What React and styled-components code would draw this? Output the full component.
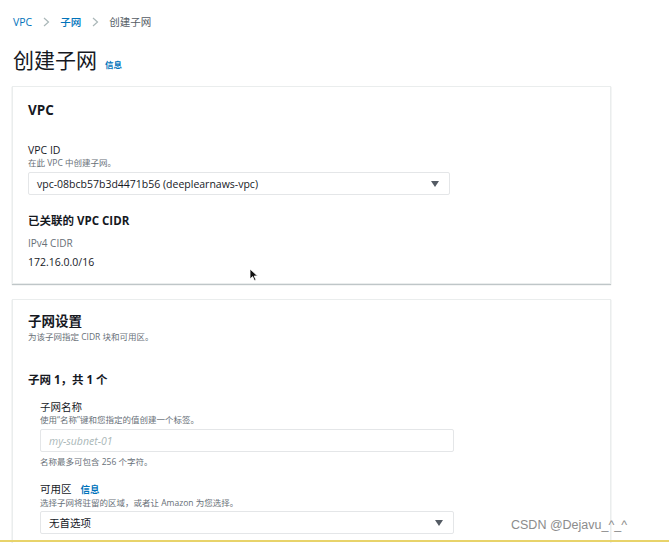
import React from 'react';
import styled, { createGlobalStyle } from 'styled-components';

const GlobalStyle = createGlobalStyle`
  html, body {
    margin: 0;
    padding: 0;
    background: #ffffff;
  }
  body {
    font-family: "Open Sans", "Noto Sans CJK SC", sans-serif;
    color: #16191f;
  }
`;

const Page = styled.div`
  position: relative;
  width: 669px;
  height: 543px;
  overflow: hidden;
  box-sizing: border-box;
  padding: 14px 0 0 12px;
`;

const Breadcrumbs = styled.nav`
  display: flex;
  align-items: center;
  height: 16px;
  padding-left: 1px;
  font-size: 10.5px;
  line-height: 16px;
`;

const Crumb = styled.span`
  color: ${props => (props.current ? '#545b64' : '#0073bb')};
  font-weight: ${props => (props.current ? 400 : 500)};
`;

const Chevron = styled.span`
  display: inline-flex;
  margin: 0 10px 0 11px;
  color: #aab7b8;
`;

const TitleRow = styled.div`
  display: flex;
  align-items: baseline;
  gap: 8px;
  margin-top: 15px;
  height: 30px;
  padding-left: 1px;
`;

const Title = styled.h1`
  margin: 0;
  font-size: 21px;
  font-weight: 400;
  line-height: 30px;
  color: #16191f;
`;

const InfoLink = styled.span`
  color: #0073bb;
  font-weight: 700;
  font-size: ${props => (props.small ? '8.5px' : '9.5px')};
  margin-left: ${props => props.gap || 0}px;
`;

const Card = styled.section`
  width: 599px;
  box-sizing: border-box;
  margin-top: ${props => props.top}px;
  border: 1px solid #eaeded;
  box-shadow: 0 1px 1px 0 rgba(0, 28, 36, 0.25);
  background: #fff;
  padding: ${props => props.pad};
`;

const CardTitle = styled.h2`
  margin: 0;
  font-size: 13.5px;
  font-weight: 700;
  line-height: 20px;
`;

const SubHeading = styled.h3`
  margin: ${props => props.top}px 0 0;
  font-size: 11.5px;
  font-weight: 700;
  line-height: 16px;
`;

const Field = styled.div`
  margin-top: ${props => props.top}px;
  padding-left: ${props => props.indent || 0}px;
`;

const Label = styled.div`
  display: flex;
  align-items: baseline;
  font-size: 10.5px;
  line-height: 14px;
  color: #16191f;
`;

const Description = styled.div`
  font-size: 8.5px;
  line-height: 12px;
  color: #687078;
  margin-top: ${props => props.top || 0}px;
`;

const Box = styled.div`
  display: flex;
  align-items: center;
  justify-content: space-between;
  box-sizing: border-box;
  width: ${props => props.width}px;
  height: 23px;
  margin-top: ${props => props.top}px;
  padding: 0 10px 0 8px;
  border: 1px solid #e4e6e8;
  border-radius: 2px;
  background: #fff;
  font-size: 10.5px;
  color: #16191f;
`;

const Placeholder = styled.span`
  font-style: italic;
  color: #aab7b8;
`;

const Caret = styled.span`
  width: 0;
  height: 0;
  border-left: 4.5px solid transparent;
  border-right: 4.5px solid transparent;
  border-top: 6px solid #545b64;
`;

const MetaLabel = styled.div`
  margin-top: 7px;
  font-size: 10px;
  line-height: 14px;
  color: #687078;
`;

const MetaValue = styled.div`
  margin-top: 5px;
  font-size: 10.5px;
  line-height: 14px;
  color: #16191f;
`;

const Cursor = styled.svg`
  position: absolute;
  left: 249px;
  top: 268px;
`;

const Watermark = styled.div`
  position: absolute;
  left: 511px;
  top: 516px;
  font-family: "Liberation Sans", Arial, sans-serif;
  font-size: 12.5px;
  line-height: 18px;
  color: #8c8c8c;
`;

const BottomRule = styled.div`
  position: absolute;
  left: 0;
  right: 0;
  top: 540px;
  height: 2px;
  background: #e8d36a;
`;

const ChevronIcon = () => (
  <svg width="7" height="10" viewBox="0 0 7 10">
    <path d="M1 1l4.5 4L1 9" fill="none" stroke="currentColor" strokeWidth="1.2" />
  </svg>
);

export default function App() {
  return (
    <Page>
      <GlobalStyle />
      <Breadcrumbs>
        <Crumb>VPC</Crumb>
        <Chevron><ChevronIcon /></Chevron>
        <Crumb>子网</Crumb>
        <Chevron><ChevronIcon /></Chevron>
        <Crumb current>创建子网</Crumb>
      </Breadcrumbs>

      <TitleRow>
        <Title>创建子网</Title>
        <InfoLink small>信息</InfoLink>
      </TitleRow>

      <Card top={11} pad="13px 15px 14px 15px">
        <CardTitle>VPC</CardTitle>
        <Field top={23}>
          <Label>VPC ID</Label>
          <Description>在此 VPC 中创建子网。</Description>
          <Box width={422} top={3}>
            <span>vpc-08bcb57b3d4471b56 (deeplearnaws-vpc)</span>
            <Caret />
          </Box>
        </Field>
        <SubHeading top={18}>已关联的 VPC CIDR</SubHeading>
        <MetaLabel>IPv4 CIDR</MetaLabel>
        <MetaValue>172.16.0.0/16</MetaValue>
      </Card>

      <Card top={15} pad="11px 15px 40px 15px">
        <CardTitle>子网设置</CardTitle>
        <Description top={0}>为该子网指定 CIDR 块和可用区。</Description>
        <SubHeading top={29}>子网 1，共 1 个</SubHeading>
        <Field top={12} indent={12}>
          <Label>子网名称</Label>
          <Description>使用“名称”键和您指定的值创建一个标签。</Description>
          <Box width={414} top={3}>
            <Placeholder>my-subnet-01</Placeholder>
          </Box>
          <Description top={4}>名称最多可包含 256 个字符。</Description>
        </Field>
        <Field top={14} indent={12}>
          <Label>
            可用区<InfoLink gap={9}>信息</InfoLink>
          </Label>
          <Description>选择子网将驻留的区域，或者让 Amazon 为您选择。</Description>
          <Box width={414} top={2}>
            <span>无首选项</span>
            <Caret />
          </Box>
        </Field>
      </Card>

      <Cursor width="10" height="14" viewBox="0 0 10 14">
        <path d="M1 1v10l2.6-2.4 1.8 4 1.6-.7-1.8-3.9H8.6z" fill="#111" stroke="#fff" strokeWidth="0.8" />
      </Cursor>
      <Watermark>CSDN @Dejavu_^_^</Watermark>
      <BottomRule />
    </Page>
  );
}
